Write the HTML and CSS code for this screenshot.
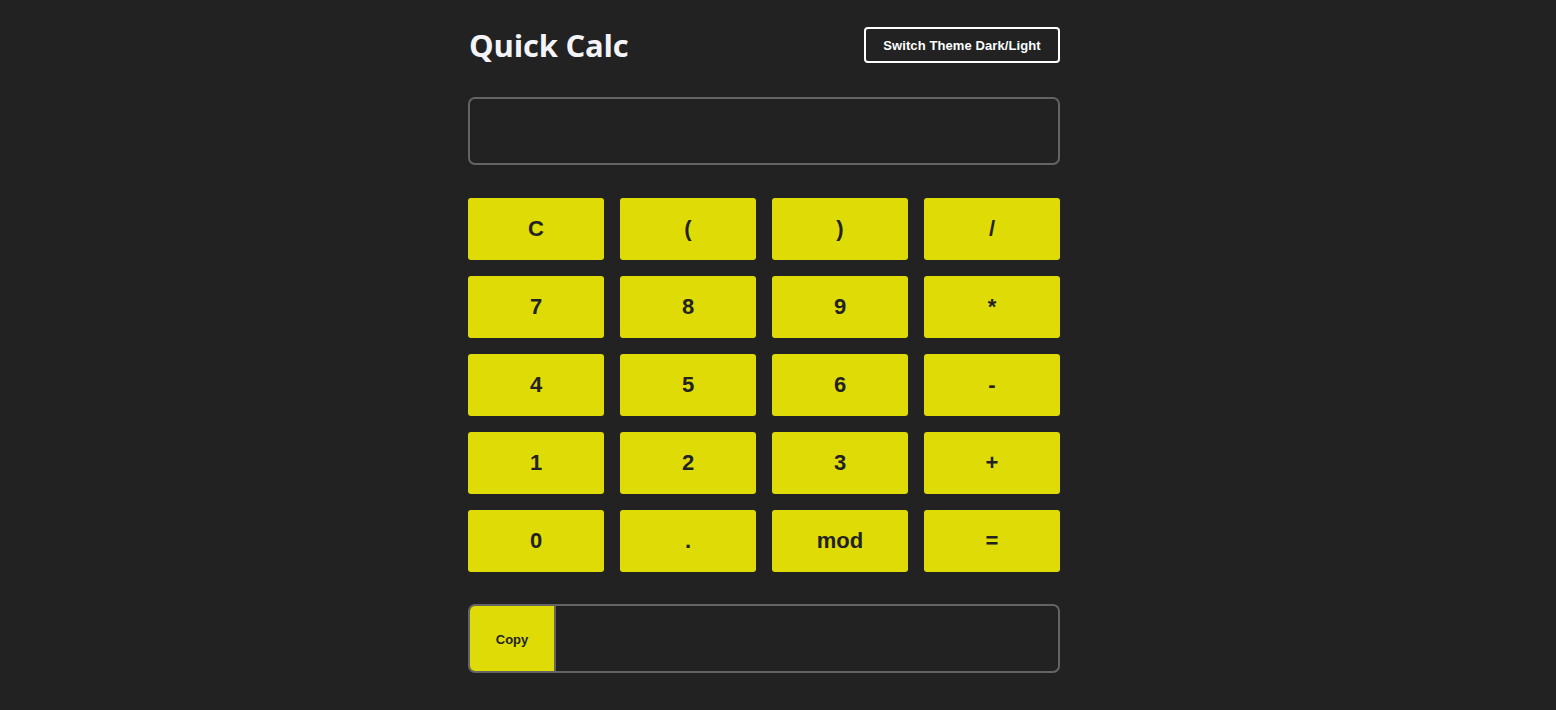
FILE: index.html
```html
<!DOCTYPE html>
<html lang="en">
<head>
<meta charset="utf-8">
<title>Quick Calc</title>
<link rel="stylesheet" href="styles.css">
</head>
<body>
<main class="calc">
  <header class="header">
    <h1 class="title">Quick Calc</h1>
    <button class="theme-btn" type="button">Switch Theme Dark/Light</button>
  </header>
  <div class="display"></div>
  <div class="keys">
    <button class="key">C</button>
    <button class="key">(</button>
    <button class="key">)</button>
    <button class="key">/</button>
    <button class="key">7</button>
    <button class="key">8</button>
    <button class="key">9</button>
    <button class="key">*</button>
    <button class="key">4</button>
    <button class="key">5</button>
    <button class="key">6</button>
    <button class="key">-</button>
    <button class="key">1</button>
    <button class="key">2</button>
    <button class="key">3</button>
    <button class="key">+</button>
    <button class="key">0</button>
    <button class="key">.</button>
    <button class="key">mod</button>
    <button class="key">=</button>
  </div>
  <div class="result">
    <button class="copy-btn" type="button">Copy</button>
    <div class="result-field"></div>
  </div>
</main>
</body>
</html>
```
FILE: styles.css
```css
* { box-sizing: border-box; }

html, body {
  margin: 0;
  background: #222222;
}

body {
  display: flex;
  justify-content: center;
  padding: 27px 28px 0 0;
  min-height: 710px;
  font-family: "Liberation Sans", Arial, sans-serif;
}

.calc {
  width: 592px;
  display: flex;
  flex-direction: column;
}

.header {
  height: 36px;
  display: flex;
  align-items: center;
  justify-content: space-between;
}

.title {
  margin: 0 0 0 1px;
  font-family: "Open Sans", sans-serif;
  font-weight: 700;
  font-size: 31px;
  line-height: 36px;
  color: #f4f4f8;
  letter-spacing: -0.2px;
}

.theme-btn {
  width: 196px;
  height: 36px;
  background: #222222;
  color: #ffffff;
  border: 2px solid #ffffff;
  border-radius: 4px;
  font-family: "Liberation Sans", Arial, sans-serif;
  font-weight: 700;
  font-size: 13px;
  letter-spacing: 0.1px;
  padding: 0;
}

.display {
  margin-top: 34px;
  height: 68px;
  border: 2px solid #646464;
  border-radius: 7px;
}

.keys {
  margin-top: 33px;
  display: grid;
  grid-template-columns: repeat(4, 136px);
  grid-auto-rows: 62px;
  gap: 16px;
}

.key {
  background: #dfdb07;
  border: none;
  border-radius: 3px;
  color: #222222;
  font-family: "Liberation Sans", Arial, sans-serif;
  font-weight: 700;
  font-size: 22px;
  padding: 0;
}

.result {
  margin-top: 32px;
  height: 69px;
  display: flex;
  border: 2px solid #646464;
  border-radius: 7px;
  overflow: hidden;
}

.copy-btn {
  width: 86px;
  background: #dfdb07;
  border: none;
  border-right: 2px solid #646464;
  color: #222222;
  font-family: "Liberation Sans", Arial, sans-serif;
  font-weight: 700;
  font-size: 13px;
  padding: 2px 0 0;
}

.result-field {
  flex: 1;
}
```
